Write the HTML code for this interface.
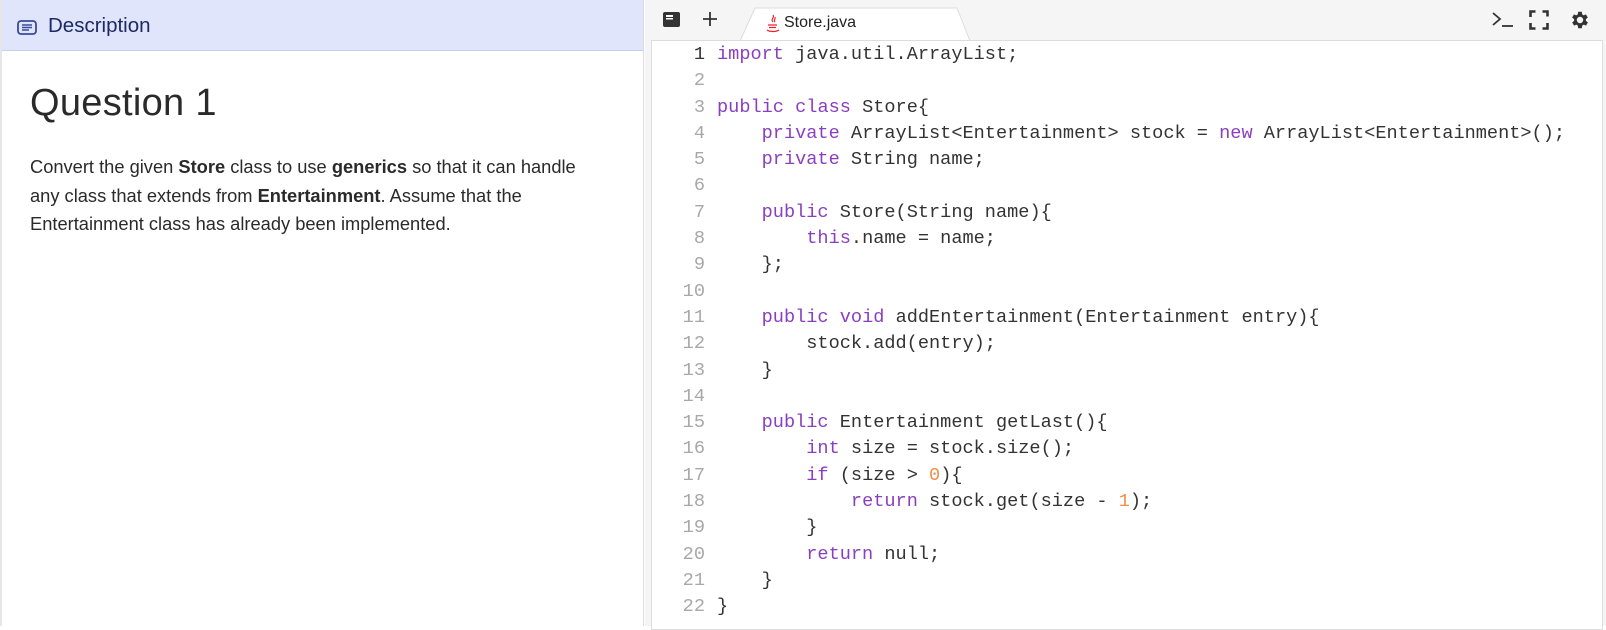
<!DOCTYPE html>
<html><head><meta charset="utf-8"><style>
*{margin:0;padding:0;box-sizing:border-box}
body{width:1606px;height:626px;overflow:hidden;background:#fff;font-family:"Liberation Sans",sans-serif;position:relative}
#left{position:absolute;left:0;top:0;width:644px;height:626px;border-left:2px solid #e6e6e6;border-right:1px solid #ddd;background:#fff}
#hdr{height:51px;background:#e0e5fb;border-bottom:1px solid #c6cff0;position:relative}
#hdr span{position:absolute;left:46px;top:14px;font-size:20.5px;color:#1b2a66}
h1{position:absolute;left:28px;top:82px;font-weight:normal;font-size:38px;color:#2a2a2a;letter-spacing:0.3px}
#desc{position:absolute;left:28px;top:153px;width:572px;font-size:18.3px;line-height:28.5px;color:#2a2a2a}
#right{position:absolute;left:645px;top:0;width:961px;height:626px;background:#f5f5f5}
#ed{position:absolute;left:6px;top:40px;width:952px;height:590px;background:#fff;border:1px solid #ddd}
.code{position:absolute;top:0;left:0;font-family:"Liberation Mono",monospace;font-size:18.6px;line-height:26.3px;white-space:pre;color:#333;padding-top:1px}
.ln{position:absolute;left:0;width:53px;text-align:right;color:#a8a8a8}
.tx{position:absolute;left:65px}
.k{color:#8a3fc0}.n{color:#f08d49}
</style></head><body>
<div id="left">
 <div id="hdr">
  <svg style="position:absolute;left:15px;top:20px" width="20" height="15" viewBox="0 0 20 15"><rect x="1" y="1" width="18" height="13" rx="3" fill="none" stroke="#3a4a9a" stroke-width="1.8"/><path d="M5 5h10M5 7.5h10M5 10h7" stroke="#3a4a9a" stroke-width="1.5"/></svg>
  <span>Description</span>
 </div>
 <h1>Question 1</h1>
 <div id="desc">Convert the given <b>Store</b> class to use <b>generics</b> so that it can handle any class that extends from <b>Entertainment</b>. Assume that the Entertainment class has already been implemented.</div>
</div>
<div id="right">
 <svg style="position:absolute;left:18px;top:12px" width="18" height="16"><rect x="0" y="0" width="17" height="15" rx="2" fill="#333"/><rect x="3" y="3" width="7" height="2" fill="#fff"/><rect x="3" y="6" width="7" height="1.5" fill="#fff"/></svg>
 <svg style="position:absolute;left:57px;top:11px" width="16" height="16"><path d="M8 1v14M1 8h14" stroke="#333" stroke-width="1.8"/></svg>
 <svg style="position:absolute;left:95px;top:6px" width="232" height="36"><path d="M0 35 L15 2 L217 2 L230 35" fill="#fff" stroke="#ddd" stroke-width="1"/></svg>
 <svg style="position:absolute;left:121px;top:14px" width="14" height="20" viewBox="0 0 14 20"><path d="M7 1c2 3-3 4 0 7M9 3c1 2-2 3 0 5" stroke="#e23" fill="none" stroke-width="1.2"/><path d="M2 11h9M3 13.5h7M1 16c3 2 9 2 12 0" stroke="#e23" fill="none" stroke-width="1.3"/></svg>
 <div style="position:absolute;left:139px;top:14px;font-size:16px;color:#222">Store.java</div>
 <svg style="position:absolute;left:846px;top:12px" width="24" height="16"><path d="M2 1l7 6-7 6" stroke="#333" fill="none" stroke-width="1.8"/><path d="M11 14h11" stroke="#333" stroke-width="1.8"/></svg>
 <svg style="position:absolute;left:884px;top:10px" width="20" height="20"><path d="M1.5 7V1.5h5M13.5 1.5h5v5M18.5 13v5.5h-5M6.5 18.5h-5V13" stroke="#333" fill="none" stroke-width="2.6"/></svg>
 <svg style="position:absolute;left:924px;top:9px" width="22" height="22" viewBox="0 0 24 24"><path fill="#333" d="M19.4 13a7.5 7.5 0 000-2l2.1-1.6-2-3.5-2.5 1a7 7 0 00-1.7-1L15 3h-4l-.4 2.9a7 7 0 00-1.7 1l-2.5-1-2 3.5L6.6 11a7.5 7.5 0 000 2l-2.1 1.6 2 3.5 2.5-1a7 7 0 001.7 1L11 21h4l.4-2.9a7 7 0 001.7-1l2.5 1 2-3.5zM13 15.5a3.5 3.5 0 110-7 3.5 3.5 0 010 7z" transform="translate(-1 0)"/></svg>
 <div id="ed">
  <div class="code ln"><span style="color:#333">1</span>
2
3
4
5
6
7
8
9
10
11
12
13
14
15
16
17
18
19
20
21
22</div>
  <div class="code tx"><span class="k">import</span> java.util.ArrayList;

<span class="k">public</span> <span class="k">class</span> Store{
    <span class="k">private</span> ArrayList&lt;Entertainment&gt; stock = <span class="k">new</span> ArrayList&lt;Entertainment&gt;();
    <span class="k">private</span> String name;

    <span class="k">public</span> Store(String name){
        <span class="k">this</span>.name = name;
    };

    <span class="k">public</span> <span class="k">void</span> addEntertainment(Entertainment entry){
        stock.add(entry);
    }

    <span class="k">public</span> Entertainment getLast(){
        <span class="k">int</span> size = stock.size();
        <span class="k">if</span> (size &gt; <span class="n">0</span>){
            <span class="k">return</span> stock.get(size - <span class="n">1</span>);
        }
        <span class="k">return</span> null;
    }
}</div>
 </div>
</div>
</body></html>
